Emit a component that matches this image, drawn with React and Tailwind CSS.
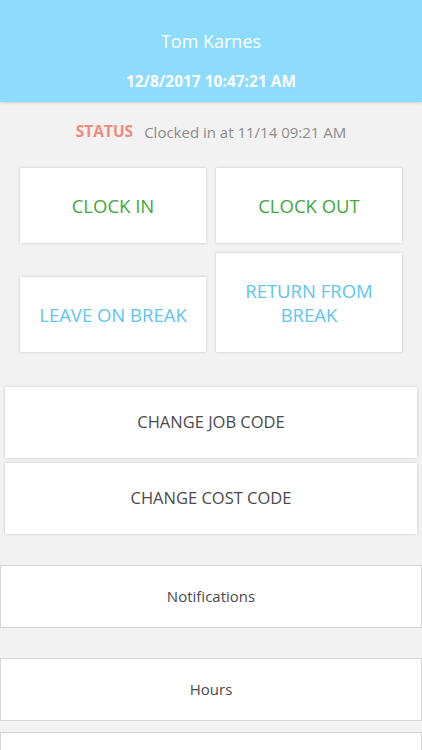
import React from 'react';

const font = { fontFamily: '"Open Sans", "Liberation Sans", sans-serif' };

function ActionButton({ children, tone, className = '' }) {
  const color = tone === 'green' ? 'text-[#3fa83a]' : 'text-[#5ec5f2]';
  return (
    <button
      className={`bg-white shadow-[0_0_3px_rgba(0,0,0,0.18)] flex items-center justify-center text-center px-3 text-[18.5px] leading-[24px] ${color} ${className}`}
    >
      {children}
    </button>
  );
}

function CodeButton({ children }) {
  return (
    <button className="w-full h-[71px] bg-white shadow-[0_0_3px_rgba(0,0,0,0.18)] flex items-center justify-center text-[16.5px] text-[#4a4a4a]">
      {children}
    </button>
  );
}

function MenuRow({ children }) {
  return (
    <button className="w-full h-[63px] shrink-0 bg-white border border-[#d6d6d6] flex items-center justify-center text-[15px] text-[#4a4a4a]">
      {children}
    </button>
  );
}

export default function App() {
  return (
    <div className="h-[750px] bg-[#f2f2f2] overflow-hidden" style={font}>
      {/* Header */}
      <div className="h-[102px] bg-[#8ddbfd] shadow-[0_1px_3px_rgba(0,0,0,0.15)] flex flex-col items-center text-white">
        <div className="mt-[29px] text-[18px] leading-[24px]">Tom Karnes</div>
        <div className="mt-[18px] text-[15.5px] leading-[20px] font-bold">12/8/2017 10:47:21 AM</div>
      </div>

      {/* Status */}
      <div className="h-[60px] flex items-center justify-center gap-[11px]">
        <span className="text-[15.5px] font-bold text-[#ef8b7b]">STATUS</span>
        <span className="text-[15px] text-[#8c8c8c]">Clocked in at 11/14 09:21 AM</span>
      </div>

      {/* Clock actions */}
      <div className="mt-[6px] grid grid-cols-2 gap-[10px] px-[20px] items-end">
        <ActionButton tone="green" className="h-[75px]">CLOCK IN</ActionButton>
        <ActionButton tone="green" className="h-[75px]">CLOCK OUT</ActionButton>
        <ActionButton tone="blue" className="h-[75px]">LEAVE ON BREAK</ActionButton>
        <ActionButton tone="blue" className="h-[99px]">RETURN FROM BREAK</ActionButton>
      </div>

      {/* Codes */}
      <div className="mt-[35px] px-[5px] flex flex-col gap-[5px]">
        <CodeButton>CHANGE JOB CODE</CodeButton>
        <CodeButton>CHANGE COST CODE</CodeButton>
      </div>

      {/* Menu */}
      <div className="mt-[31px] flex flex-col">
        <MenuRow>Notifications</MenuRow>
        <div className="h-[30px] shrink-0" />
        <MenuRow>Hours</MenuRow>
        <div className="h-[11px] shrink-0" />
        <MenuRow>&nbsp;</MenuRow>
      </div>
    </div>
  );
}
